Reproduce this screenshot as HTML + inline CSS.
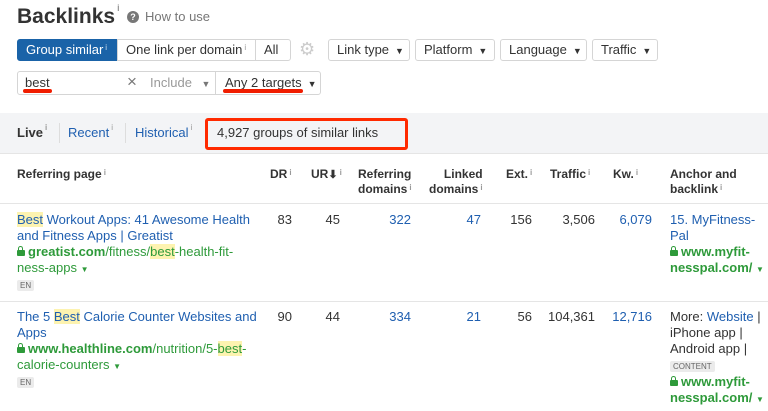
<!DOCTYPE html><html><head><style>
body{margin:0;width:768px;height:411px;overflow:hidden;background:#fff;font-family:"Liberation Sans",Arial,sans-serif;color:#333;font-size:13px;position:relative}
.a{position:absolute;white-space:nowrap}
sup{font-size:8px;color:#999;vertical-align:top;position:relative;top:-2px;margin-left:2px}
.btn{position:absolute;top:39px;height:22px;border:1px solid #d5d5d5;border-radius:3px;box-sizing:border-box;line-height:20px;padding-left:8px;font-size:13px;color:#333}
.tri{font-size:9px;margin-left:6px}
.bl{color:#1f5fb0}.gr{color:#2e9a3a}
.hl{background:#fdf3b0}
.h{position:absolute;font-weight:bold;font-size:12px;color:#333;line-height:15px}
.n{position:absolute;text-align:right;width:60px}
.badge{position:absolute;background:#ebebeb;color:#666;font-size:8px;padding:1px 3px;border-radius:2px}
.lk{display:inline-block;width:8px;height:6px;background:#2e9a3a;border-radius:1px;position:relative;margin-right:3px;vertical-align:0;margin-top:4px}
.lk:before{content:"";position:absolute;left:1px;top:-4px;width:3px;height:3px;border:1.5px solid #2e9a3a;border-bottom:none;border-radius:3px 3px 0 0}
.c{position:absolute;line-height:16px;white-space:nowrap}
</style></head><body>
<div class="a" style="left:17px;top:5px;font-size:21px;font-weight:bold;color:#333">Backlinks<sup style="font-size:9px">i</sup></div>
<div class="a" style="left:127px;top:11px;width:12px;height:12px;border-radius:50%;background:#777;color:#fff;font-size:9px;text-align:center;line-height:12px;font-weight:bold">?</div>
<div class="a" style="left:145px;top:9px;color:#777;font-size:13px">How to use</div>

<div class="btn" style="left:17px;width:101px;background:#1a63a8;color:#fff;border-color:#1a63a8;border-radius:3px 0 0 3px">Group similar<sup style="color:#cde">i</sup></div>
<div class="btn" style="left:117px;width:139px;border-radius:0">One link per domain<sup>i</sup></div>
<div class="btn" style="left:255px;width:36px;border-radius:0 3px 3px 0">All</div>
<div class="a" style="left:299px;top:39px;font-size:18px;color:#ccc">⚙</div>
<div class="btn" style="left:328px;width:82px">Link type<span class="tri">▼</span></div>
<div class="btn" style="left:415px;width:80px">Platform<span class="tri">▼</span></div>
<div class="btn" style="left:500px;width:87px">Language<span class="tri">▼</span></div>
<div class="btn" style="left:592px;width:66px">Traffic<span class="tri">▼</span></div>

<div class="a" style="left:17px;top:71px;width:304px;height:24px;border:1px solid #d5d5d5;border-radius:3px;box-sizing:border-box"></div>
<div class="a" style="left:215px;top:71px;width:1px;height:24px;background:#d5d5d5"></div>
<div class="a" style="left:25px;top:75px">best</div>
<div class="a" style="left:127px;top:72px;font-size:17px;color:#777">×</div>
<div class="a" style="left:150px;top:75px;color:#999">Include <span style="font-size:9px;margin-left:6px;color:#777">▼</span></div>
<div class="a" style="left:225px;top:75px">Any 2 targets<span class="tri">▼</span></div>
<div class="a" style="left:23px;top:89px;width:29px;height:4px;background:#f01d00;border-radius:2px"></div>
<div class="a" style="left:223px;top:89px;width:80px;height:4px;background:#f01d00;border-radius:2px"></div>

<div class="a" style="left:0;top:113px;width:768px;height:40px;background:#f3f4f6;border-bottom:1px solid #e5e5e5"></div>
<div class="a" style="left:17px;top:125px;font-weight:bold">Live<sup>i</sup></div>
<div class="a" style="left:59px;top:123px;width:1px;height:20px;background:#ddd"></div>
<div class="a bl" style="left:68px;top:125px">Recent<sup>i</sup></div>
<div class="a" style="left:125px;top:123px;width:1px;height:20px;background:#ddd"></div>
<div class="a bl" style="left:135px;top:125px">Historical<sup>i</sup></div>
<div class="a" style="left:205px;top:118px;width:203px;height:32px;border:3px solid #ff2a00;border-radius:3px;box-sizing:border-box"></div>
<div class="a" style="left:217px;top:125px">4,927 groups of similar links</div>

<div class="h" style="left:17px;top:167px">Referring page<sup>i</sup></div>
<div class="h" style="left:270px;top:167px">DR<sup>i</sup></div>
<div class="h" style="left:311px;top:167px">UR<span style="font-size:11px">⬇</span><sup>i</sup></div>
<div class="h" style="left:358px;top:167px">Referring<br>domains<sup>i</sup></div>
<div class="h" style="left:429px;top:167px;text-align:right">Linked<br>domains<sup>i</sup></div>
<div class="h" style="left:506px;top:167px">Ext.<sup>i</sup></div>
<div class="h" style="left:550px;top:167px">Traffic<sup>i</sup></div>
<div class="h" style="left:613px;top:167px">Kw.<sup>i</sup></div>
<div class="h" style="left:670px;top:167px">Anchor and<br>backlink<sup>i</sup></div>
<div class="a" style="left:0;top:203px;width:768px;height:1px;background:#e5e5e5"></div>

<div class="c bl" style="left:17px;top:212px"><span class="hl">Best</span> Workout Apps: 41 Awesome Health<br>and Fitness Apps | Greatist</div>
<div class="c gr" style="left:17px;top:244px"><span class="lk"></span><b>greatist.com</b>/fitness/<span class="hl">best</span>-health-fit-<br>ness-apps <span style="font-size:8px">▼</span></div>
<div class="badge" style="left:17px;top:280px">EN</div>
<div class="n c" style="left:232px;top:212px">83</div>
<div class="n c" style="left:280px;top:212px">45</div>
<div class="n c bl" style="left:351px;top:212px">322</div>
<div class="n c bl" style="left:421px;top:212px">47</div>
<div class="n c" style="left:472px;top:212px">156</div>
<div class="n c" style="left:535px;top:212px">3,506</div>
<div class="n c bl" style="left:592px;top:212px">6,079</div>
<div class="c bl" style="left:670px;top:212px">15. MyFitness-<br>Pal</div>
<div class="c gr" style="left:670px;top:244px;font-weight:bold"><span class="lk"></span>www.myfit-<br>nesspal.com/ <span style="font-size:8px">▼</span></div>

<div class="a" style="left:0;top:301px;width:768px;height:1px;background:#e5e5e5"></div>
<div class="c bl" style="left:17px;top:309px">The 5 <span class="hl">Best</span> Calorie Counter Websites and<br>Apps</div>
<div class="c gr" style="left:17px;top:341px"><span class="lk"></span><b>www.healthline.com</b>/nutrition/5-<span class="hl">best</span>-<br>calorie-counters <span style="font-size:8px">▼</span></div>
<div class="badge" style="left:17px;top:377px">EN</div>
<div class="n c" style="left:232px;top:309px">90</div>
<div class="n c" style="left:280px;top:309px">44</div>
<div class="n c bl" style="left:351px;top:309px">334</div>
<div class="n c bl" style="left:421px;top:309px">21</div>
<div class="n c" style="left:472px;top:309px">56</div>
<div class="n c" style="left:535px;top:309px">104,361</div>
<div class="n c bl" style="left:592px;top:309px">12,716</div>
<div class="c" style="left:670px;top:309px">More: <span class="bl">Website</span> |<br>iPhone app |<br>Android app |</div>
<div class="badge" style="left:670px;top:361px">CONTENT</div>
<div class="c gr" style="left:670px;top:374px;font-weight:bold"><span class="lk"></span>www.myfit-<br>nesspal.com/ <span style="font-size:8px">▼</span></div>
</body></html>
